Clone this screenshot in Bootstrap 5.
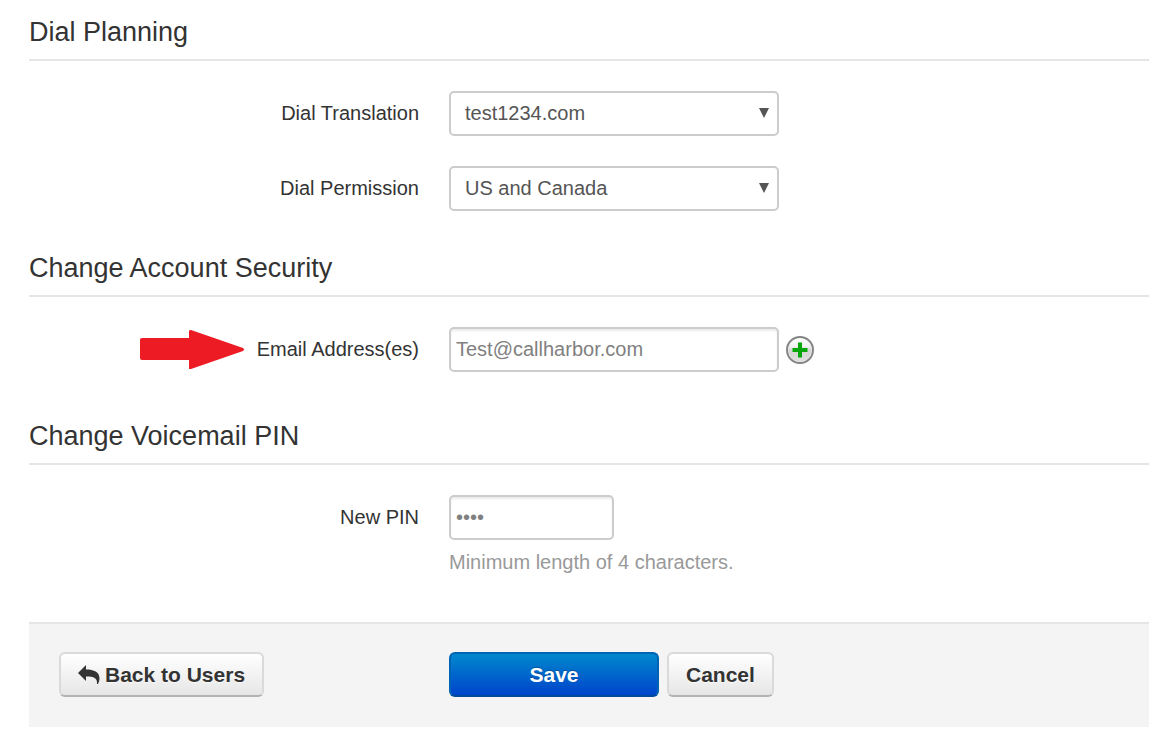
<!DOCTYPE html>
<html lang="en">
<head>
<meta charset="utf-8">
<meta name="viewport" content="width=device-width, initial-scale=1">
<title>Edit User</title>
<link href="https://cdn.jsdelivr.net/npm/bootstrap@5.3.0/dist/css/bootstrap.min.css" rel="stylesheet">
<style>
  body { font-family: "Liberation Sans", Arial, sans-serif; font-size: 20px; line-height: 30px; color: #333; }
  .page { padding: 5px 0 21px 29px; }
  .section-title { font-size: 27px; line-height: 54px; font-weight: 400; border-bottom: 2px solid #e5e5e5; margin-bottom: 30px; }
  .field-row { gap: 8px; margin-bottom: 30px; }
  .field-row.last-field { margin-bottom: 37px; }
  .field-label { gap: 13px; line-height: 45px; }
  .form-control, .form-select { height: 45px; border: 2px solid #ccc; border-radius: 5px; font-size: 20px; line-height: 30px; color: #555; max-width: 330px; }
  .form-control { padding: 4px 5px; box-shadow: inset 0 2px 2px rgba(0,0,0,.075); }
  .form-control::placeholder { color: #808080; }
  .form-select { padding: 4px 28px 6px 14px;
    background-image: url("data:image/svg+xml,%3Csvg xmlns='http://www.w3.org/2000/svg' viewBox='0 0 10 10'%3E%3Cpath fill='%23555' d='M0 0h10L5 10z'/%3E%3C/svg%3E");
    background-size: 10px 10px; background-position: right 8px top 15px; }
  .pin-box { max-width: 165px; }
  .hint { color: #999; margin-top: 7px; }
  .add-btn { line-height: 0; margin-left: 7px; }
  .actions { background: #f4f4f4; border-top: 2px solid #e5e5e5; padding: 28px 30px 30px; gap: 8px; margin-top: 45px; }
  .actions .btn { height: 45px; padding: 0 17px; border-width: 2px; border-radius: 6px; font-size: 21px; font-weight: 700; line-height: 41px; }
  .btn-plain { color: #333; background: linear-gradient(#fff, #e6e6e6); background-clip: padding-box; border-color: #dadada #dadada #b3b3b3; text-shadow: 0 1px 1px rgba(255,255,255,.75); }
  .btn-plain:hover { color: #333; background: #e6e6e6; border-color: #dadada #dadada #b3b3b3; }
  .btn-save { width: 210px; color: #fff; background: linear-gradient(#08c, #04c) padding-box, #0062b8 border-box; border-color: #0064b5 #0064b5 #00499a; text-shadow: 0 -1px 1px rgba(0,0,0,.25); }
  .btn-save:hover { color: #fff; background: #04c; border-color: #00499a; }
  @media (min-width: 768px) {
    .field-row { gap: 30px; }
    .field-label { flex: 0 0 390px; justify-content: flex-end; }
    .back-slot { flex: 0 0 382px; }
  }
</style>
</head>
<body>
<form class="page">
  <section>
    <h2 class="section-title">Dial Planning</h2>
    <div class="field-row d-flex flex-column flex-md-row">
      <label class="field-label d-flex" for="translation">Dial Translation</label>
      <select class="form-select" id="translation"><option>test1234.com</option></select>
    </div>
    <div class="field-row d-flex flex-column flex-md-row">
      <label class="field-label d-flex" for="permission">Dial Permission</label>
      <select class="form-select" id="permission"><option>US and Canada</option></select>
    </div>
  </section>

  <section>
    <h2 class="section-title">Change Account Security</h2>
    <div class="field-row last-field d-flex flex-column flex-md-row">
      <label class="field-label d-flex align-items-center" for="email">
        <svg width="104" height="39" viewBox="0 0 104 39" aria-hidden="true"><path fill="#ed1c24" d="M2 8H49V1Q49 0 51 0L103 18Q105 19.500 103 21L51 39H49V30H2Q0 30 0 28V10Q0 8 2 8Z"/></svg>
        <span>Email Address(es)</span>
      </label>
      <div class="d-flex flex-fill align-items-center">
        <input class="form-control" type="email" id="email" placeholder="Test@callharbor.com">
        <button type="button" class="add-btn btn p-0 border-0" aria-label="Add email address">
          <svg width="28" height="28" viewBox="0 0 28 28" aria-hidden="true">
            <defs><linearGradient id="disc" x1="0" y1="0" x2="0" y2="1"><stop offset="0" stop-color="#fff"/><stop offset=".35" stop-color="#f0f0f0"/><stop offset=".5" stop-color="#d4d4d4"/><stop offset="1" stop-color="#dedede"/></linearGradient></defs>
            <circle cx="14" cy="14" r="13" fill="#f4f4f4" stroke="#858585" stroke-width="2"/>
            <circle cx="14" cy="14" r="11.500" fill="url(#disc)"/>
            <path d="M14 6.500V21.500M6.500 14H21.500" stroke="#08a50c" stroke-width="4"/>
          </svg>
        </button>
      </div>
    </div>
  </section>

  <section>
    <h2 class="section-title">Change Voicemail PIN</h2>
    <div class="field-row d-flex flex-column flex-md-row">
      <label class="field-label d-flex align-self-start" for="pin">New PIN</label>
      <div class="flex-fill">
        <input class="form-control pin-box" type="password" id="pin" placeholder="••••" aria-describedby="pin-hint">
        <div class="hint" id="pin-hint">Minimum length of 4 characters.</div>
      </div>
    </div>
  </section>

  <div class="actions d-flex flex-wrap">
    <div class="back-slot">
      <button type="button" class="btn btn-plain d-flex align-items-center gap-1">
        <svg width="23" height="20" viewBox="0 0 23 20" aria-hidden="true"><path fill="#333" d="M0 8L8 0V4.500C16 4.500 21.500 7 21.500 13.500Q21.500 16.500 20 19H19C19.500 13 16 11.500 8 11.500V16Z"/></svg>
        <span>Back to Users</span>
      </button>
    </div>
    <button type="submit" class="btn btn-save">Save</button>
    <button type="button" class="btn btn-plain">Cancel</button>
  </div>
</form>
<script src="https://cdn.jsdelivr.net/npm/bootstrap@5.3.0/dist/js/bootstrap.bundle.min.js"></script>
</body>
</html>
